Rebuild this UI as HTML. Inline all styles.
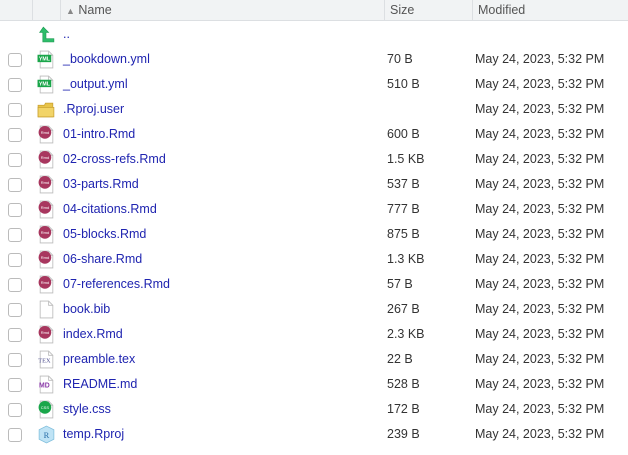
<!DOCTYPE html>
<html><head><style>
*{margin:0;padding:0;box-sizing:border-box}
body{width:628px;height:455px;background:#fff;font-family:"Liberation Sans",sans-serif;font-size:12.5px;color:#333;position:relative;overflow:hidden}
.hdr{position:absolute;left:0;top:0;width:628px;height:21px;background:#f1f3f4;border-bottom:1px solid #dcdfe2}
.hdr div{position:absolute;top:0;height:20px;border-left:1px solid #dcdfe2;line-height:21px;color:#555;padding-left:5px}
.row{position:absolute;left:0;width:628px;height:25px}
.cb{position:absolute;left:8px;top:6px;width:14px;height:14px;border:1px solid #bbb;border-radius:3px;background:#fff}
.ic{position:absolute;left:37px;top:3px;width:19px;height:19px}
.nm{position:absolute;left:63px;top:5px;color:#1f24b0}
.sz{position:absolute;left:387px;top:5px}
.md{position:absolute;left:475px;top:5px}
</style></head><body>
<div class="hdr">
<div style="left:32px;width:28px"></div>
<div style="left:60px;width:324px"><span style="font-size:9px;color:#888">▲</span> Name</div>
<div style="left:384px;width:88px">Size</div>
<div style="left:472px;width:156px">Modified</div>
</div>

<div class="row" style="top:22px">
<svg class="ic" viewBox="0 0 18 18"><path d="M4 2 L9 7 L6.5 7 L6.5 13 L14 13 L14 16 L3.5 16 L3.5 7 L0.5 7 Z" transform="translate(2,0)" fill="#2ebd6a" stroke="#1a9a50" stroke-width=".6"/></svg>
<span class="nm">..</span></div>

<div id="rows"></div>
<script>
var d=[["_bookdown.yml","70 B","yml"],["_output.yml","510 B","yml"],[".Rproj.user","","dir"],["01-intro.Rmd","600 B","rmd"],["02-cross-refs.Rmd","1.5 KB","rmd"],["03-parts.Rmd","537 B","rmd"],["04-citations.Rmd","777 B","rmd"],["05-blocks.Rmd","875 B","rmd"],["06-share.Rmd","1.3 KB","rmd"],["07-references.Rmd","57 B","rmd"],["book.bib","267 B","doc"],["index.Rmd","2.3 KB","rmd"],["preamble.tex","22 B","tex"],["README.md","528 B","md"],["style.css","172 B","css"],["temp.Rproj","239 B","rproj"]];
var page='<path d="M3 1 H11 L15 5 V17 H3 Z" fill="#fff" stroke="#bbb" stroke-width=".8"/><path d="M11 1 V5 H15" fill="none" stroke="#bbb" stroke-width=".8"/>';
var ic={
yml:page+'<rect x="0.5" y="4.5" width="13" height="7" fill="#1aa64a"/><text x="7" y="10" font-size="5" fill="#fff" text-anchor="middle" font-family="Liberation Sans" font-weight="bold">YML</text>',
dir:'<path d="M1 5 H7 L8 3 H15 V16 H1 Z" fill="#e8c44a" stroke="#c9a030" stroke-width=".7"/><rect x="1" y="7" width="15" height="9" fill="#f2d468" stroke="#c9a030" stroke-width=".7"/>',
rmd:page+'<circle cx="7.5" cy="7" r="6" fill="#a8365e"/><text x="7.5" y="8.5" font-size="3.8" fill="#fff" text-anchor="middle" font-family="Liberation Sans">Rmd</text>',
doc:page,
tex:page+'<text x="7" y="12" font-size="6" fill="#4a4a8a" text-anchor="middle" font-family="Liberation Serif">TEX</text>',
md:page+'<text x="7" y="12" font-size="6.5" fill="#8a3aa8" text-anchor="middle" font-family="Liberation Sans" font-weight="bold">MD</text>',
css:page+'<circle cx="7.5" cy="7" r="6" fill="#1aa64a"/><text x="7.5" y="8.5" font-size="3.8" fill="#fff" text-anchor="middle" font-family="Liberation Sans">CSS</text>',
rproj:'<path d="M9 1 L16 4.5 V13.5 L9 17 L2 13.5 V4.5 Z" fill="#bfe3f5" stroke="#7fbedc" stroke-width=".7"/><text x="9" y="12.5" font-size="8" fill="#2a6fa8" text-anchor="middle" font-family="Liberation Serif">R</text>'
};
var h='';
d.forEach(function(r,i){var t=47+i*25;
h+='<div class="row" style="top:'+t+'px"><div class="cb"></div><svg class="ic" viewBox="0 0 18 18">'+ic[r[2]]+'</svg><span class="nm">'+r[0]+'</span><span class="sz">'+r[1]+'</span><span class="md">May 24, 2023, 5:32 PM</span></div>';});
document.getElementById('rows').outerHTML=h;
</script>
</body></html>
